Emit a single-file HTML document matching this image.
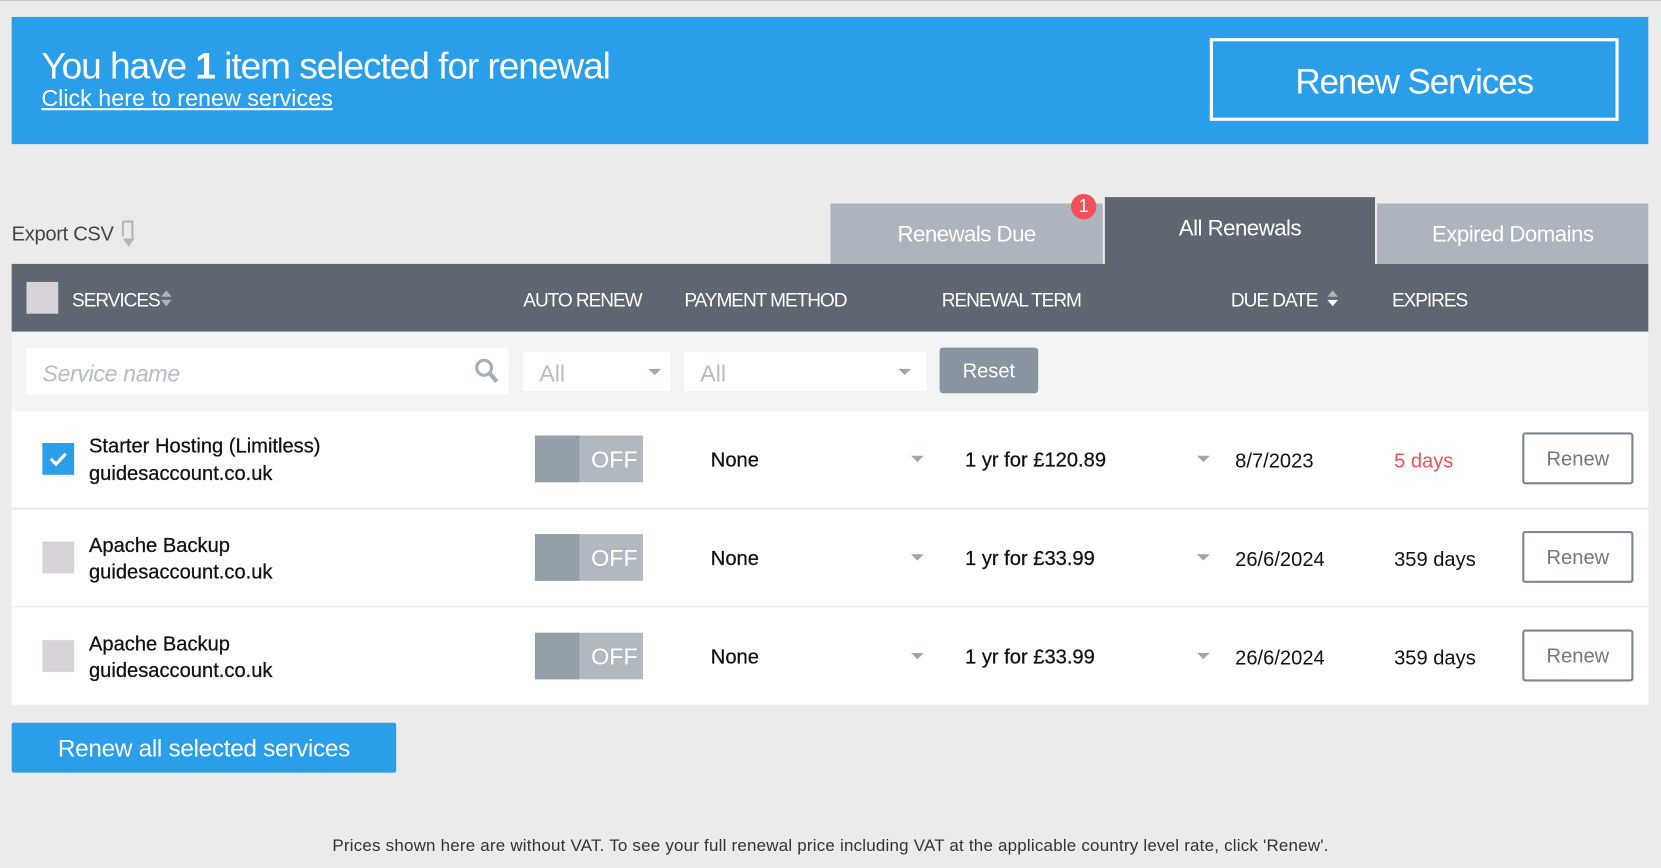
<!DOCTYPE html>
<html><head><meta charset="utf-8"><style>
*{box-sizing:border-box;margin:0;padding:0}
html,body{width:1661px;height:868px;overflow:hidden;background:#ebebeb}
#s{width:1568px;height:819px;transform:scale(1.05932,1.05983);transform-origin:0 0;position:relative;font-family:"Liberation Sans",sans-serif;background:#ebebeb}
.a{position:absolute;white-space:nowrap}
.c{letter-spacing:-0.5px}
.hd{color:#fff;font-size:18px;letter-spacing:-1px}
.row{position:absolute;left:11px;width:1545px;background:#fff;height:92px;border-bottom:1px solid #e6e6e6}
.cb{position:absolute;width:30px;height:30px;background:#d8d3d9}
.tog{position:absolute;width:102px;height:44px;background:#b2b8bf}
.tog:before{content:"";position:absolute;left:0;top:0;width:42px;height:44px;background:#939ea9}
.tog span{position:absolute;left:53px;top:10px;color:#fff;font-size:22px}
.tri{position:absolute;width:0;height:0;border-left:6px solid transparent;border-right:6px solid transparent;border-top:6px solid #a0a6ad}
.btn{position:absolute;width:105px;height:49px;border:2px solid #7d8590;border-radius:3px;color:#6f7884;font-size:19px;text-align:center;line-height:47px}
.t{font-size:19px;color:#111;-webkit-text-stroke:0.25px #111}
</style></head><body><div id="s">
<div class="a" style="left:0;top:0;width:1568px;height:1px;background:#ccc"></div>
<div class="a" style="left:11px;top:16px;width:1545px;height:120px;background:#2b9ee9"></div>
<div class="a c" style="left:39px;top:43px;color:#fff;font-size:35px;letter-spacing:-1px">You have <b>1</b> item selected for renewal</div>
<div class="a" style="left:39px;top:80px;color:#fff;font-size:22px;text-decoration:underline;letter-spacing:0px">Click here to renew services</div>
<div class="a" style="left:1142px;top:36px;width:386px;height:78px;border:3px solid #fff;color:#fff;font-size:33px;text-align:center;line-height:76px;letter-spacing:-1px">Renew Services</div>

<div class="a" style="left:11px;top:211px;color:#444;font-size:19px;letter-spacing:-0.3px">Export CSV</div>
<svg class="a" style="left:113px;top:207px" width="16" height="28"><path d="M3 2h9v16M3 2v14" stroke="#b0b6bd" stroke-width="2" fill="none"/><path d="M3 18h11l-5.5 8z" fill="#b0b6bd"/></svg>

<div class="a" style="left:784px;top:192px;width:257px;height:57px;background:#adb4bd;color:#fff;font-size:21px;text-align:center;line-height:60px;letter-spacing:-0.5px">Renewals Due</div>
<div class="a" style="left:1011px;top:183px;width:24px;height:24px;border-radius:12px;background:#f0505a;color:#fff;font-size:17px;text-align:center;line-height:24px">1</div>
<div class="a" style="left:1043px;top:186px;width:255px;height:64px;background:#5e6672;color:#fff;font-size:21px;text-align:center;line-height:60px;letter-spacing:-0.5px">All Renewals</div>
<div class="a" style="left:1300px;top:192px;width:256px;height:57px;background:#adb4bd;color:#fff;font-size:21px;text-align:center;line-height:60px;letter-spacing:-0.5px">Expired Domains</div>

<div class="a" style="left:11px;top:249px;width:1545px;height:64px;background:#5e6672"></div>
<div class="cb" style="left:25px;top:266px"></div>
<div class="a hd" style="left:68px;top:273px">SERVICES</div>
<svg class="a" style="left:151px;top:273px" width="12" height="17"><path d="M1 7L6 1L11 7zM1 10L6 16L11 10z" fill="#adb4bd"/></svg>
<div class="a hd" style="left:494px;top:273px">AUTO RENEW</div>
<div class="a hd" style="left:646px;top:273px">PAYMENT METHOD</div>
<div class="a hd" style="left:889px;top:273px">RENEWAL TERM</div>
<div class="a hd" style="left:1162px;top:273px">DUE DATE</div>
<svg class="a" style="left:1252px;top:273px" width="12" height="17"><path d="M1 7L6 1L11 7z" fill="#adb4bd"/><path d="M1 10L6 16L11 10z" fill="#fff"/></svg>
<div class="a hd" style="left:1314px;top:273px">EXPIRES</div>

<div class="a" style="left:11px;top:313px;width:1545px;height:75px;background:#f3f4f5"></div>
<div class="a" style="left:25px;top:328px;width:455px;height:44px;background:#fff"></div>
<div class="a" style="left:40px;top:340px;color:#b5bcc4;font-size:22px;font-style:italic;letter-spacing:-0.4px">Service name</div>
<svg class="a" style="left:448px;top:338px" width="24" height="26"><circle cx="9" cy="9" r="7" stroke="#a8aeb5" stroke-width="3" fill="none"/><path d="M14 14l7 8" stroke="#a8aeb5" stroke-width="4"/></svg>
<div class="a" style="left:494px;top:332px;width:139px;height:37px;background:#fff"></div>
<div class="a" style="left:509px;top:340px;color:#b5bcc4;font-size:22px">All</div>
<div class="tri" style="left:612px;top:348px"></div>
<div class="a" style="left:646px;top:332px;width:229px;height:37px;background:#fff"></div>
<div class="a" style="left:661px;top:340px;color:#b5bcc4;font-size:22px">All</div>
<div class="tri" style="left:848px;top:348px"></div>
<div class="a" style="left:887px;top:328px;width:93px;height:43px;background:#8894a0;border-radius:3px;color:#fff;font-size:19px;text-align:center;line-height:45px">Reset</div>

<div class="row" style="top:388px"></div>
<div class="row" style="top:481px"></div>
<div class="row" style="top:573px;border:none"></div>

<div class="cb" style="left:40px;top:418px;background:#2b9ee9"></div>
<svg class="a" style="left:40px;top:418px" width="30" height="30"><path d="M8 15l5 5l9-10" stroke="#fff" stroke-width="3" fill="none"/></svg>
<div class="a t" style="left:84px;top:411px">Starter Hosting (Limitless)</div>
<div class="a t" style="left:84px;top:437px">guidesaccount.co.uk</div>
<div class="tog" style="left:505px;top:411px"><span>OFF</span></div>
<div class="a t" style="left:671px;top:424px">None</div><div class="tri" style="left:860px;top:430px"></div>
<div class="a t" style="left:911px;top:424px">1 yr for £120.89</div><div class="tri" style="left:1130px;top:430px"></div>
<div class="a t" style="left:1166px;top:425px;-webkit-text-stroke:0">8/7/2023</div>
<div class="a t" style="left:1316px;top:425px;color:#f0505a;-webkit-text-stroke:0">5 days</div>
<div class="btn" style="left:1437px;top:408px">Renew</div>

<div class="cb" style="left:40px;top:511px"></div>
<div class="a t" style="left:84px;top:505px">Apache Backup</div>
<div class="a t" style="left:84px;top:530px">guidesaccount.co.uk</div>
<div class="tog" style="left:505px;top:504px"><span>OFF</span></div>
<div class="a t" style="left:671px;top:517px">None</div><div class="tri" style="left:860px;top:523px"></div>
<div class="a t" style="left:911px;top:517px">1 yr for £33.99</div><div class="tri" style="left:1130px;top:523px"></div>
<div class="a t" style="left:1166px;top:518px;-webkit-text-stroke:0">26/6/2024</div>
<div class="a t" style="left:1316px;top:518px;-webkit-text-stroke:0">359 days</div>
<div class="btn" style="left:1437px;top:501px">Renew</div>

<div class="cb" style="left:40px;top:604px"></div>
<div class="a t" style="left:84px;top:598px">Apache Backup</div>
<div class="a t" style="left:84px;top:623px">guidesaccount.co.uk</div>
<div class="tog" style="left:505px;top:597px"><span>OFF</span></div>
<div class="a t" style="left:671px;top:610px">None</div><div class="tri" style="left:860px;top:616px"></div>
<div class="a t" style="left:911px;top:610px">1 yr for £33.99</div><div class="tri" style="left:1130px;top:616px"></div>
<div class="a t" style="left:1166px;top:611px;-webkit-text-stroke:0">26/6/2024</div>
<div class="a t" style="left:1316px;top:611px;-webkit-text-stroke:0">359 days</div>
<div class="btn" style="left:1437px;top:594px">Renew</div>

<div class="a" style="left:11px;top:682px;width:363px;height:47px;background:#2b9ee9;border-radius:2px;color:#fff;font-size:23px;text-align:center;line-height:49px;letter-spacing:-0.3px">Renew all selected services</div>
<div class="a" style="left:0;top:790px;width:1568px;text-align:center;color:#333;font-size:16px;letter-spacing:0.2px">Prices shown here are without VAT. To see your full renewal price including VAT at the applicable country level rate, click 'Renew'.</div>
</div></body></html>
